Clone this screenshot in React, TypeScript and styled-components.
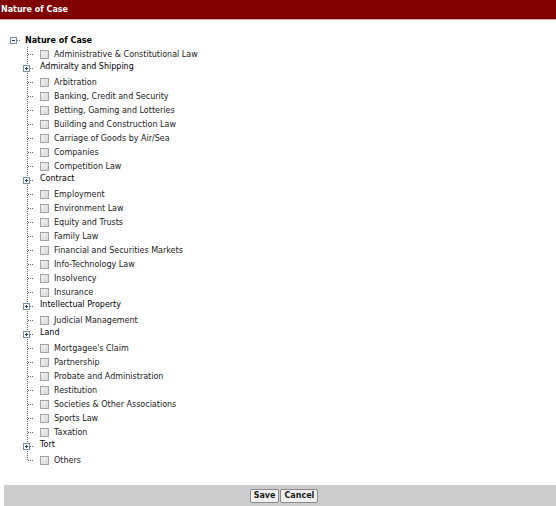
import React, {useState} from "react";
import styled, {createGlobalStyle} from "styled-components";

type Node = {
    label: string
    group?: boolean
}

const nodes: Node[] = [
    {label: "Administrative & Constitutional Law"},
    {label: "Admiralty and Shipping", group: true},
    {label: "Arbitration"},
    {label: "Banking, Credit and Security"},
    {label: "Betting, Gaming and Lotteries"},
    {label: "Building and Construction Law"},
    {label: "Carriage of Goods by Air/Sea"},
    {label: "Companies"},
    {label: "Competition Law"},
    {label: "Contract", group: true},
    {label: "Employment"},
    {label: "Environment Law"},
    {label: "Equity and Trusts"},
    {label: "Family Law"},
    {label: "Financial and Securities Markets"},
    {label: "Info-Technology Law"},
    {label: "Insolvency"},
    {label: "Insurance"},
    {label: "Intellectual Property", group: true},
    {label: "Judicial Management"},
    {label: "Land", group: true},
    {label: "Mortgagee's Claim"},
    {label: "Partnership"},
    {label: "Probate and Administration"},
    {label: "Restitution"},
    {label: "Societies & Other Associations"},
    {label: "Sports Law"},
    {label: "Taxation"},
    {label: "Tort", group: true},
    {label: "Others"},
]

const GlobalStyle = createGlobalStyle`
    html, body {
        margin: 0;
        padding: 0;
        background: #ffffff;
    }
    body {
        font-family: "DejaVu Sans", Verdana, sans-serif;
        font-size: 8px;
        color: #000000;
    }
`

export default function App() {
    const [checked, setChecked] = useState<Record<string, boolean>>({})

    const toggle = (label: string) => {
        setChecked({...checked, [label]: !checked[label]})
    }

    return (
        <Page>
            <GlobalStyle/>
            <Header>Nature of Case</Header>
            <Tree>
                <RootRow>
                    <ToggleBox><Minus/></ToggleBox>
                    <RootDash/>
                    <RootLabel>Nature of Case</RootLabel>
                </RootRow>
                {nodes.map((node, i) => {
                    const last = i === nodes.length - 1
                    return (
                        <Row key={node.label}>
                            <Branch last={last}>
                                {node.group && <PlusBox><Minus/><PlusBar/></PlusBox>}
                            </Branch>
                            {node.group
                                ? <GroupLabel>{node.label}</GroupLabel>
                                : <>
                                    <Check type="checkbox" checked={!!checked[node.label]}
                                           onChange={() => toggle(node.label)}/>
                                    <LeafLabel>{node.label}</LeafLabel>
                                </>}
                        </Row>
                    )
                })}
            </Tree>
            <Footer>
                <FooterButton>Save</FooterButton>
                <FooterButton>Cancel</FooterButton>
            </Footer>
        </Page>
    )
}

const Page = styled.div`
    width: 556px;
    height: 506px;
    display: flex;
    flex-direction: column;
    overflow: hidden;
`

const Header = styled.div`
    height: 19px;
    background: #800000;
    border-bottom: 1px solid #d8a8a8;
    color: #ffffff;
    font-weight: bold;
    line-height: 19px;
    padding-left: 1px;
`

const Tree = styled.div`
    flex: 1;
    display: flex;
    flex-direction: column;
    padding: 13px 0 0 10px;
`

const RootRow = styled.div`
    height: 14px;
    display: flex;
    align-items: center;
`

const ToggleBox = styled.span`
    position: relative;
    width: 5px;
    height: 5px;
    border: 1px solid #7b8fa6;
    background: #f4f6f8;
    flex-shrink: 0;
`

const Minus = styled.span`
    position: absolute;
    left: 1px;
    right: 1px;
    top: 2px;
    height: 1px;
    background: #1f3a5c;
`

const PlusBar = styled.span`
    position: absolute;
    top: 1px;
    bottom: 1px;
    left: 2px;
    width: 1px;
    background: #1f3a5c;
`

const RootDash = styled.span`
    width: 4px;
    height: 1px;
    margin: 0 3px 0 0;
    background-image: linear-gradient(to right, #666 50%, transparent 50%);
    background-size: 2px 1px;
`

const RootLabel = styled.span`
    font-weight: bold;
    padding-left: 1px;
`

const Row = styled.div`
    height: 14px;
    display: flex;
    align-items: center;
    padding-left: 13px;
`

const Branch = styled.div<{ last: boolean }>`
    position: relative;
    width: 14px;
    height: 14px;
    flex-shrink: 0;

    &::before {
        content: "";
        position: absolute;
        left: 4px;
        top: 0;
        width: 1px;
        height: ${props => props.last ? "7px" : "14px"};
        background-image: linear-gradient(to bottom, #666 50%, transparent 50%);
        background-size: 1px 2px;
    }

    &::after {
        content: "";
        position: absolute;
        left: 5px;
        top: 7px;
        width: 5px;
        height: 1px;
        background-image: linear-gradient(to right, #666 50%, transparent 50%);
        background-size: 2px 1px;
    }
`

const PlusBox = styled(ToggleBox)`
    position: absolute;
    left: 0;
    top: 4px;
    z-index: 1;
`

const Check = styled.input`
    appearance: none;
    margin: 0 5px 0 3px;
    width: 9px;
    height: 9px;
    border: 1px solid #a4a4a4;
    background: linear-gradient(to bottom right, #f2f2f2, #d8d8d8);
    box-sizing: border-box;
    flex-shrink: 0;
`

const LeafLabel = styled.span`
    color: #1a1a1a;
    white-space: nowrap;
`

const GroupLabel = styled.span`
    margin: -3px 0 0 3px;
    white-space: nowrap;
`

const Footer = styled.div`
    height: 21px;
    margin-left: 4px;
    padding-left: 8px;
    background: #cccccc;
    display: flex;
    justify-content: center;
    align-items: center;
    gap: 1px;
`

const FooterButton = styled.button`
    font-family: "DejaVu Sans", Verdana, sans-serif;
    font-size: 8px;
    font-weight: bold;
    color: #1a1a1a;
    background: #f0f0f0;
    border: 1px solid #8a8a8a;
    border-radius: 2px;
    padding: 1px 3px;
    height: 14px;
    line-height: 10px;
`
